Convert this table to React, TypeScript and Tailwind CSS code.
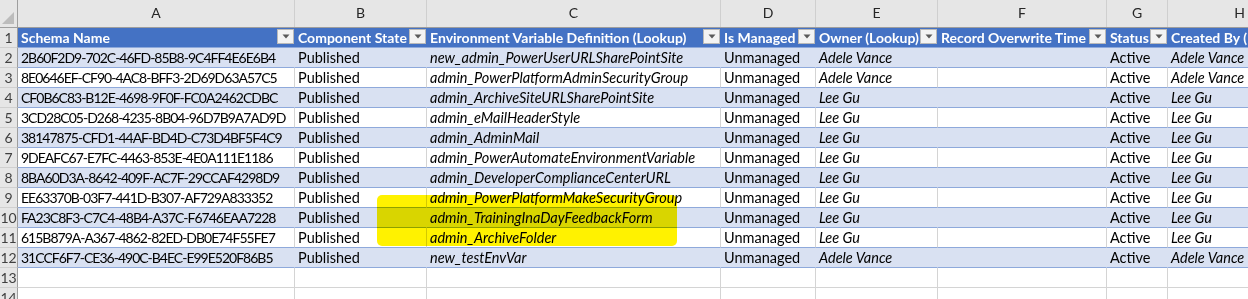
import React from "react";

const letters = ["A", "B", "C", "D", "E", "F", "G", "H"];
const headers = [
  "Schema Name",
  "Component State",
  "Environment Variable Definition (Lookup)",
  "Is Managed",
  "Owner (Lookup)",
  "Record Overwrite Time",
  "Status",
  "Created By (Lookup)",
];

const rows: [string, string, string, string][] = [
  ["2B60F2D9-702C-46FD-85B8-9C4FF4E6E6B4", "new_admin_PowerUserURLSharePointSite", "Adele Vance", "Adele Vance"],
  ["8E0646EF-CF90-4AC8-BFF3-2D69D63A57C5", "admin_PowerPlatformAdminSecurityGroup", "Adele Vance", "Adele Vance"],
  ["CF0B6C83-B12E-4698-9F0F-FC0A2462CDBC", "admin_ArchiveSiteURLSharePointSite", "Lee Gu", "Lee Gu"],
  ["3CD28C05-D268-4235-8B04-96D7B9A7AD9D", "admin_eMailHeaderStyle", "Lee Gu", "Lee Gu"],
  ["38147875-CFD1-44AF-BD4D-C73D4BF5F4C9", "admin_AdminMail", "Lee Gu", "Lee Gu"],
  ["9DEAFC67-E7FC-4463-853E-4E0A111E1186", "admin_PowerAutomateEnvironmentVariable", "Lee Gu", "Lee Gu"],
  ["8BA60D3A-8642-409F-AC7F-29CCAF4298D9", "admin_DeveloperComplianceCenterURL", "Lee Gu", "Lee Gu"],
  ["EE63370B-03F7-441D-B307-AF729A833352", "admin_PowerPlatformMakeSecurityGroup", "Lee Gu", "Lee Gu"],
  ["FA23C8F3-C7C4-48B4-A37C-F6746EAA7228", "admin_TrainingInaDayFeedbackForm", "Lee Gu", "Lee Gu"],
  ["615B879A-A367-4862-82ED-DB0E74F55FE7", "admin_ArchiveFolder", "Lee Gu", "Lee Gu"],
  ["31CCF6F7-CE36-490C-B4EC-E99E520F86B5", "new_testEnvVar", "Adele Vance", "Adele Vance"],
];

const gridTemplate = "grid grid-cols-[18px_277px_132px_294px_95px_122px_169px_61px_144px]";

function FilterButton() {
  return (
    <div className="absolute right-[1px] top-[1px] w-[17px] h-[15px] bg-[#f3f3f3] border border-[#b9b9b9] flex items-center justify-center">
      <svg width="8" height="5" viewBox="0 0 8 5">
        <polygon points="0.5,0.5 7.5,0.5 4,4.5" fill="#5a5a5a" />
      </svg>
    </div>
  );
}

function RowNum({ n }: { n: number }) {
  return (
    <div className="h-[20px] bg-[#e6e6e6] border-r border-r-[#9e9e9e] border-b border-b-[#d0d0d0] flex items-center justify-center text-[14px] text-[#404040]">
      {n}
    </div>
  );
}

export default function App() {
  return (
    <div
      className="w-[1248px] h-[299px] overflow-hidden bg-white relative"
      style={{ fontFamily: "Lato, 'Liberation Sans', sans-serif" }}
    >
      <div className="w-[1314px]">
        {/* column letters */}
        <div className={`${gridTemplate} h-[28px] bg-[#e6e6e6] border-b border-b-[#9e9e9e]`}>
          <div className="relative border-r border-r-[#9e9e9e]">
            <svg className="absolute right-[3px] bottom-[3px]" width="12" height="12" viewBox="0 0 12 12">
              <polygon points="12,0 12,12 0,12" fill="#bcbcbc" />
            </svg>
          </div>
          {letters.map((l) => (
            <div
              key={l}
              className="flex items-end justify-center pb-[4px] border-r border-r-[#cfcfcf] text-[14px] text-[#262626]"
            >
              {l}
            </div>
          ))}
        </div>

        {/* header row */}
        <div className={gridTemplate}>
          <RowNum n={1} />
          {headers.map((h) => (
            <div
              key={h}
              className="relative h-[20px] bg-[#4472c4] border-b border-b-[#8ea9db] flex items-center pl-[3px] text-[14px] font-bold text-white whitespace-nowrap overflow-hidden"
            >
              {h}
              {h !== "Created By (Lookup)" && <FilterButton />}
            </div>
          ))}
        </div>

        {/* data rows */}
        {rows.map((r, i) => {
          const blue = i % 2 === 0;
          const bg = blue ? "bg-[#d9e1f2]" : "bg-white";
          const vline = blue ? "border-r-[#d9e1f2]" : "border-r-[#d4d4d4]";
          const cells: { t: string; italic?: boolean; guid?: boolean }[] = [
            { t: r[0], guid: true },
            { t: "Published" },
            { t: r[1], italic: true },
            { t: "Unmanaged" },
            { t: r[2], italic: true },
            { t: "" },
            { t: "Active" },
            { t: r[3], italic: true },
          ];
          return (
            <div key={i} className={gridTemplate}>
              <RowNum n={i + 2} />
              {cells.map((c, j) => (
                <div
                  key={j}
                  className={`h-[20px] ${bg} border-b border-b-[#8ea9db] border-r ${vline} flex items-center pl-[3px] text-black whitespace-nowrap overflow-hidden ${c.italic ? "italic" : ""} ${c.guid ? "text-[14px] tracking-[-1px]" : "text-[14.5px]"}`}
                >
                  {c.t}
                </div>
              ))}
            </div>
          );
        })}

        {/* empty rows */}
        {[13, 14].map((n) => (
          <div key={n} className={gridTemplate}>
            <RowNum n={n} />
            {letters.map((l) => (
              <div key={l} className="h-[20px] border-b border-b-[#d4d4d4] border-r border-r-[#d4d4d4]" />
            ))}
          </div>
        ))}
      </div>

      {/* yellow highlighter mark */}
      <div className="absolute left-[377px] top-[195px] w-[300px] h-[51px] bg-[#fff200] mix-blend-multiply rounded-[5px] blur-[0.6px] pointer-events-none" />
    </div>
  );
}
